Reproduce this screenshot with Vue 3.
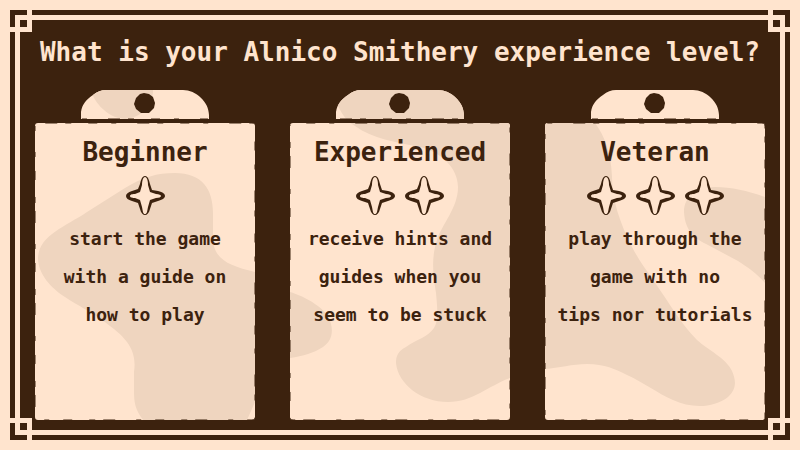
<template>
  <main class="page">
    <div class="frame">
      <span v-for="corner in corners" :key="corner" class="corner" :class="corner"></span>

      <div class="panel">
        <h1>What is your Alnico Smithery experience level?</h1>

        <div class="levels">
          <button
            v-for="level in levels"
            :key="level.name"
            type="button"
            class="card"
            @click="selected = level.name"
          >
            <svg class="board" viewBox="0 0 220 330" preserveAspectRatio="none" aria-hidden="true">
              <defs>
                <clipPath :id="'board-' + level.name">
                  <path :d="clipShape" />
                  <path :d="sheetShape" />
                </clipPath>
              </defs>
              <g :clip-path="`url(#board-${level.name})`">
                <rect class="paper" width="220" height="330" />
                <path v-for="blob in level.blobs" :key="blob" class="blob" :d="blob" />
                <path class="edge" :d="sheetShape" :stroke-dashoffset="level.stars * 37" />
                <path class="edge" d="M47 29H173" :stroke-dashoffset="level.stars * 23" />
              </g>
              <path class="hole" d="M105 4L109 3L114 4L118 7L120 13L119 18L114 23L106 23L101 19L99 14L101 8Z" />
            </svg>

            <span class="name">{{ level.name }}</span>
            <span class="stars">
              <svg v-for="n in level.stars" :key="n" class="star" viewBox="0 0 39 39" aria-hidden="true">
                <path class="star-line" :d="starOuter" />
                <path class="star-fill" :d="starInner" />
              </svg>
            </span>
            <span class="text">
              <span v-for="line in level.lines" :key="line">{{ line }}</span>
            </span>
          </button>
        </div>
      </div>
    </div>
  </main>
</template>

<script setup>
import { ref } from "vue";

const selected = ref(null);

const corners = ["top-left", "top-right", "bottom-left", "bottom-right"];

const clipShape = "M46 29V22C47 14 52 9 58 5Q64 0 71 0H148C161 0 174 12 174 25V29Z";
const sheetShape = "M0 36Q0 33 3 33H217Q220 33 220 36V327Q220 330 217 330H3Q0 330 0 327Z";

const starOuter =
  "M19 0C22 0 23 4 24 8L26 14L32 15C37 16 39 18 39 20C39 22 36 24 32 25L26 27L24 33C23 37 21 39 19 39C17 39 15 37 14 33L12 27L6 25C2 24 0 22 0 20C0 18 2 16 6 15L12 13L14 8C15 4 16 0 19 0Z";
const starInner =
  "M19 1C21 1 22 5 22 9L24 16L30 18C33 18 35 19 35 20C35 21 33 22 30 22L24 24L22 31C21 36 21 38 19 38C17 38 17 36 16 31L14 24L9 22C5 22 4 21 4 20C4 19 5 18 9 18L14 16L16 9C16 5 17 1 19 1Z";

const levels = [
  {
    name: "Beginner",
    stars: 1,
    lines: ["start the game", "with a guide on", "how to play"],
    blobs: [
      "M56 0C57 8 70 28 90 29C106 28 118 16 118 0Z",
      "M3 168C4 145 30 137 52 122L90 98C108 87 122 83 140 83C167 83 178 99 178 123L178 151C180 170 195 176 220 182V312L212 330H108C100 319 99 313 99 300V282C103 256 86 244 67 230C57 222 43 216 30 207C16 198 3 184 3 168Z",
    ],
  },
  {
    name: "Experienced",
    stars: 2,
    lines: ["receive hints and", "guides when you", "seem to be stuck"],
    blobs: [
      "M46 0V12C52 24 55 30 65 36C83 49 105 52 130 57C151 62 168 78 168 97C168 118 152 134 147 150C141 168 143 185 146 203C147 215 149 230 144 238C137 248 127 249 116 257C108 261 106 266 106 273C108 294 131 312 158 312C183 312 198 296 220 288V0Z",
      "M0 202C14 206 39 219 41 234C43 242 42 251 33 257C24 263 13 266 0 268Z",
    ],
  },
  {
    name: "Veteran",
    stars: 3,
    lines: ["play through the", "game with no", "tips nor tutorials"],
    blobs: [
      "M0 33H50C60 47 66 62 67 87C67 110 75 133 87 157C97 176 107 187 117 203C128 219 138 236 152 250C163 260 181 268 187 281C191 290 192 299 183 307C168 319 145 318 128 310C112 303 98 292 82 285C70 279 60 274 42 274C27 274 14 278 0 279Z",
      "M220 107C203 101 187 97 170 97C152 98 139 106 139 122C140 142 151 149 163 155L193 171C204 178 212 184 220 193Z",
    ],
  },
];
</script>

<style>
body {
  margin: 0;
  background: #ffe4ce;
}
</style>

<style scoped>
.page {
  display: flex;
  min-height: 100vh;
  padding: 10px;
  box-sizing: border-box;
  background: #ffe4ce;
  color: #3c220e;
  font-family: "DejaVu Sans Mono", monospace;
  font-weight: bold;
}

.frame {
  position: relative;
  display: flex;
  flex: 1;
  padding: 5px;
  border: 5px solid #3c220e;
}

.panel {
  flex: 1;
  display: flex;
  flex-direction: column;
  padding: 10px 15px;
  background: #3c220e;
}

/* corner ornaments, drawn over the frame border */
.corner {
  position: absolute;
  width: 7px;
  height: 7px;
  border: 5px solid #ffe4ce;
  background: #3c220e;
}

.corner::before,
.corner::after {
  content: "";
  position: absolute;
  background: #ffe4ce;
}

.corner::before {
  width: 5px;
  height: 22px;
}

.corner::after {
  width: 22px;
  height: 5px;
}

.top-left,
.top-right {
  top: 0;
}

.bottom-left,
.bottom-right {
  bottom: 0;
}

.top-left,
.bottom-left {
  left: 0;
}

.top-right,
.bottom-right {
  right: 0;
}

.top-left::before,
.bottom-left::before {
  left: 7px;
}

.top-right::before,
.bottom-right::before {
  right: 7px;
}

.top-left::before,
.top-right::before {
  bottom: -5px;
}

.bottom-left::before,
.bottom-right::before {
  top: -5px;
}

.top-left::after,
.bottom-left::after {
  right: -5px;
}

.top-right::after,
.bottom-right::after {
  left: -5px;
}

.top-left::after,
.top-right::after {
  top: 7px;
}

.bottom-left::after,
.bottom-right::after {
  bottom: 7px;
}

h1 {
  margin: 0;
  color: #ffe4ce;
  font-size: 26px;
  line-height: 44px;
  text-align: center;
}

.levels {
  flex: 1;
  display: grid;
  grid-template-columns: repeat(3, 1fr);
  gap: 35px;
  padding-top: 16px;
}

.card {
  position: relative;
  display: flex;
  flex-direction: column;
  align-items: center;
  justify-content: flex-start;
  min-width: 0;
  padding: 44px 0 20px;
  border: 0;
  background: none;
  color: inherit;
  font: inherit;
  cursor: pointer;
}

.board {
  position: absolute;
  top: 0;
  left: 0;
  width: 100%;
  height: 100%;
}

.paper,
.star-fill {
  fill: #ffe4ce;
}

.blob {
  fill: #efd5bf;
}

.hole,
.star-line {
  fill: #3c220e;
}

/* worn edges of the sheet */
.edge {
  fill: none;
  stroke: #3c220e;
  stroke-width: 1;
  stroke-dasharray: 9 14 5 21 12 8 6 17;
}

.name,
.stars,
.text {
  position: relative;
}

.name {
  font-size: 26px;
  line-height: 36px;
}

.stars {
  display: flex;
  gap: 10px;
  padding-top: 6px;
}

.star {
  width: 39px;
  height: 39px;
}

.text {
  display: flex;
  flex-direction: column;
  padding-top: 5px;
  font-size: 18px;
  line-height: 38px;
  white-space: nowrap;
}
</style>
